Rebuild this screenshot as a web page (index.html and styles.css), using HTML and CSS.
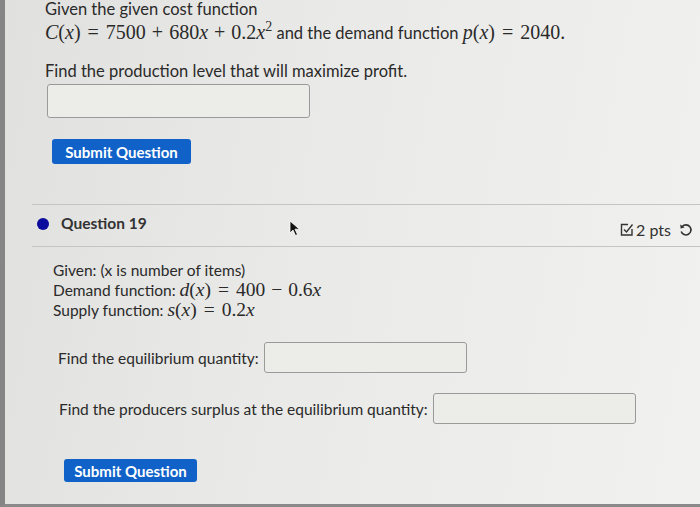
FILE: index.html
```html
<!DOCTYPE html>
<html>
<head>
<meta charset="utf-8">
<link rel="stylesheet" href="styles.css">
</head>
<body>
<div class="frame">
  <section class="q1">
    <div class="line">Given the given cost function</div>
    <div class="line mline"><span class="m"><i>C</i>(<i>x</i>)<span class="op">=</span>7500<span class="op2">+</span>680<i>x</i><span class="op2">+</span>0.2<i>x</i><sup>2</sup></span> and the demand function <span class="m"><i>p</i>(<i>x</i>)<span class="op">=</span>2040.</span></div>
    <div class="line find">Find the production level that will maximize profit.</div>
    <div class="inp inp1"></div>
    <button class="submit s1">Submit Question</button>
  </section>

  <div class="qhead">
    <span class="dot"></span>
    <span class="qtitle">Question 19</span>
    <span class="spacer"></span>
    <span class="pts">
      <svg class="chk" width="15" height="15" viewBox="0 0 15 15"><path d="M9 2.5H2.5V13H13V7" fill="none" stroke="#333" stroke-width="1.4"/><path d="M5 7.5L7.5 10L13.5 2.5" fill="none" stroke="#333" stroke-width="1.4"/></svg>
      2 pts
      <svg class="redo" width="14" height="14" viewBox="0 0 14 14"><path d="M3.2 3.6A5 5 0 1 1 2.2 8.5" fill="none" stroke="#333" stroke-width="1.6"/><path d="M1.2 1.5L1.6 5.6L5.6 4.6Z" fill="#333"/></svg>
    </span>
  </div>

  <section class="q2">
    <div class="l2">Given: (x is number of items)</div>
    <div class="l2">Demand function: <span class="m m2"><i>d</i>(<i>x</i>)<span class="op">=</span>400<span class="op2">−</span>0.6<i>x</i></span></div>
    <div class="l2">Supply function: <span class="m m2"><i>s</i>(<i>x</i>)<span class="op">=</span>0.2<i>x</i></span></div>
    <div class="row r1"><span>Find the equilibrium quantity:</span><span class="inp inp2"></span></div>
    <div class="row r2"><span>Find the producers surplus at the equilibrium quantity:</span><span class="inp inp3"></span></div>
    <button class="submit s2">Submit Question</button>
  </section>

  <svg class="cursor" width="12" height="17" viewBox="0 0 12 17"><path d="M1 1L1 13L4 10L6.5 15.5L8.5 14.5L6 9.2L10.5 9.2Z" fill="#111" stroke="#fff" stroke-width="0.8"/></svg>
</div>
</body>
</html>
```

FILE: styles.css
```css
html, body {
  margin: 0;
  padding: 0;
}
body {
  width: 700px;
  height: 507px;
  overflow: hidden;
  background: linear-gradient(100deg, #e0e0de 0%, #e9e9e7 40%, #f1f1ef 100%);
  font-family: Lato, "Open Sans", sans-serif;
  color: #2a2a2a;
}
.frame {
  position: relative;
  height: 504px;
  border-left: 5px solid #858585;
  border-bottom: 3px solid #8a8a8a;
  box-sizing: content-box;
}
.q1 {
  padding-left: 40px;
  font-size: 16.5px;
}
.line {
  line-height: 19px;
}
.mline {
  line-height: 26px;
}
.find {
  margin-top: 16px;
}
.m {
  font-family: "Liberation Serif", "Times New Roman", serif;
  font-size: 20px;
}
.m2 {
  font-size: 19.5px;
}
.m i {
  font-style: italic;
}
.op {
  margin: 0 7px;
}
.op2 {
  margin: 0 6px;
}
.m2 .op {
  margin: 0 7px;
}
.m2 .op2 {
  margin: 0 6px;
}
.m sup {
  font-size: 14px;
  line-height: 0;
}
.inp {
  display: block;
  border: 1.5px solid #9a9a9a;
  border-radius: 3px;
  background: #ecece9;
  box-sizing: border-box;
}
.inp1 {
  width: 263px;
  height: 34px;
  margin-top: 3px;
  margin-left: 2px;
}
.submit {
  display: block;
  font-family: Lato, sans-serif;
  font-weight: bold;
  font-size: 15px;
  color: #fff;
  background: #1062c8;
  border: none;
  border-radius: 3px;
  padding: 0;
  height: 25px;
}
.s1 {
  width: 139px;
  margin-top: 21px;
  margin-left: 7px;
}
.qhead {
  margin-top: 40px;
  margin-left: 27px;
  border-top: 1.5px solid #c4c4c2;
  border-bottom: 1.5px solid #c4c4c2;
  height: 41px;
  display: flex;
  align-items: center;
}
.dot {
  width: 12px;
  height: 12px;
  border-radius: 50%;
  background: #0b0b9e;
  margin-left: 5px;
  margin-top: -3px;
}
.qtitle {
  font-size: 15.5px;
  font-weight: bold;
  color: #333;
  margin-left: 12px;
  margin-top: -5px;
}
.spacer {
  flex: 1;
}
.pts {
  display: flex;
  align-items: center;
  font-size: 16px;
  color: #333;
  margin-top: 8px;
  margin-right: 7px;
}
.chk {
  margin-right: 2px;
}
.redo {
  margin-left: 8px;
}
.q2 {
  padding-left: 48px;
  padding-top: 13px;
  font-size: 15.5px;
}
.l2 {
  line-height: 20px;
}
.row {
  display: flex;
  align-items: center;
  gap: 5px;
}
.r1 {
  margin-top: 22px;
  margin-left: 5px;
}
.inp2 {
  width: 203px;
  height: 31px;
}
.r2 {
  margin-top: 20px;
  margin-left: 6px;
}
.inp3 {
  width: 203px;
  height: 31px;
}
.s2 {
  width: 133px;
  height: 23px;
  margin-top: 35px;
  margin-left: 11px;
}
.cursor {
  position: absolute;
  left: 284px;
  top: 220px;
}
```
